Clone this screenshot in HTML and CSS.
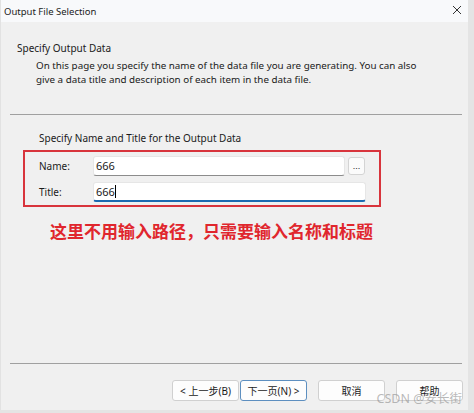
FILE: index.html
```html
<!DOCTYPE html>
<html lang="zh-CN">
<head>
    <meta charset="UTF-8">
    <meta name="viewport" content="width=device-width, initial-scale=1.0">
    <title>Output File Selection</title>
    <link rel="stylesheet" href="styles.css">
</head>
<body>
    <div class="window">
        <div class="titlebar">
            <span class="title">Output File Selection</span>
            <svg class="close" width="10" height="10" viewBox="0 0 10 10">
                <path d="M1 1 L9 9 M9 1 L1 9" stroke="#333" stroke-width="1" fill="none"/>
            </svg>
        </div>

        <div class="header">
            <div class="header-title">Specify Output Data</div>
            <div class="header-desc">
                On this page you specify the name of the data file you are generating. You can also<br>
                give a data title and description of each item in the data file.
            </div>
        </div>

        <div class="separator"></div>

        <div class="content">
            <div class="group-label">Specify Name and Title for the Output Data</div>

            <div class="field-box">
                <div class="field-row">
                    <label class="field-label">Name:</label>
                    <div class="input">666</div>
                    <button class="browse-btn">...</button>
                </div>
                <div class="field-row">
                    <label class="field-label">Title:</label>
                    <div class="input input-focus">666<span class="caret"></span></div>
                </div>
            </div>

            <div class="note">这里不用输入路径，只需要输入名称和标题</div>
        </div>

        <div class="separator"></div>

        <div class="buttons">
            <button class="btn">&lt; 上一步(B)</button>
            <button class="btn btn-default">下一页(N) &gt;</button>
            <button class="btn btn-gap">取消</button>
            <button class="btn btn-gap">帮助</button>
        </div>

        <div class="watermark">CSDN @安长街</div>
    </div>
</body>
</html>
```

FILE: styles.css
```css
body {
    margin: 0;
    width: 474px;
    height: 413px;
    overflow: hidden;
    background-color: #e4e4e4;
    font-family: "Noto Sans", "Noto Sans CJK SC", sans-serif;
    color: #1a1a1a;
}
.window {
    position: relative;
    width: 468px;
    height: 410px;
    background-color: #f0f0f0;
    border-left: 1px solid #e2e2e2;
    box-sizing: border-box;
    display: flex;
    flex-direction: column;
}
.titlebar {
    height: 22px;
    background-color: #f8f9fb;
    display: flex;
    align-items: center;
    justify-content: space-between;
    padding: 0 6px 0 3px;
}
.title {
    font-size: 9.5px;
    color: #222;
}
.close {
    margin-top: -2px;
}
.header {
    padding: 19px 0 0 16px;
    height: 73px;
}
.header-title {
    font-size: 10px;
    line-height: 14px;
}
.header-desc {
    font-size: 9.8px;
    line-height: 14px;
    padding: 4px 0 0 19px;
    white-space: nowrap;
}
.separator {
    height: 1px;
    background-color: #a0a0a0;
    margin: 0 6px 0 9px;
}
.content {
    flex: 1;
    padding: 16px 0 0 22px;
}
.group-label {
    font-size: 10px;
    line-height: 14px;
    padding-left: 16px;
    margin-bottom: 5px;
}
.field-box {
    width: 358px;
    height: 57px;
    box-sizing: border-box;
    border: 2px solid #d8343c;
    padding: 1px 0 0 14px;
}
.field-row {
    display: flex;
    align-items: center;
    height: 26px;
}
.field-label {
    width: 54px;
    font-size: 10px;
}
.input {
    width: 252px;
    height: 20px;
    box-sizing: border-box;
    background: #fff;
    border: 1px solid #e6e6e6;
    border-bottom: 1px solid #8c8c8c;
    border-radius: 3px;
    font-size: 11px;
    line-height: 18px;
    padding-left: 2px;
}
.input-focus {
    width: 273px;
    border-bottom: 2px solid #1c6ab0;
}
.caret {
    display: inline-block;
    width: 1px;
    height: 13px;
    background: #000;
    vertical-align: -2px;
}
.browse-btn {
    width: 17px;
    height: 18px;
    margin-left: 3px;
    padding: 0;
    background: #fbfbfb;
    border: 1px solid #d4d4d4;
    border-radius: 3px;
    font-size: 9px;
    line-height: 10px;
    color: #222;
}
.note {
    font-family: "Noto Sans CJK SC", sans-serif;
    font-weight: bold;
    font-size: 17px;
    color: #e0262d;
    padding: 11px 0 0 27px;
}
.buttons {
    display: flex;
    justify-content: flex-end;
    padding: 16px 5px 9px 0;
}
.btn {
    width: 67px;
    height: 21px;
    background: #fdfdfd;
    border: 1px solid #d0d0d0;
    border-radius: 3px;
    font-family: "Noto Sans", "Noto Sans CJK SC", sans-serif;
    font-size: 10px;
    color: #1a1a1a;
    padding: 0;
    margin-left: 1px;
}
.btn-default {
    border-color: #5d8fc0;
}
.btn-gap {
    margin-left: 11px;
}
.watermark {
    position: absolute;
    right: 6px;
    bottom: 3px;
    font-family: "Noto Sans", "Noto Sans CJK SC", sans-serif;
    font-size: 12.5px;
    color: rgba(140, 140, 140, 0.6);
}
```
